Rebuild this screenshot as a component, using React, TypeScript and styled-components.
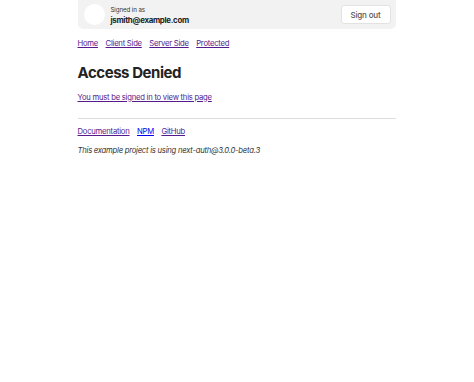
import React from "react";
import styled, { createGlobalStyle } from "styled-components";

const Global = createGlobalStyle`
  html, body { margin: 0; padding: 0; background: #fff; }
  body {
    font-family: Inter, "Liberation Sans", sans-serif;
    color: #333;
    font-size: 7.7px;
    letter-spacing: -0.25px;
    line-height: 1.4;
  }
`;

const Page = styled.div`
  width: 318px;
  padding-right: 1px;
  margin: 0 auto;
`;

const HeaderBox = styled.header`
  display: flex;
  align-items: center;
  gap: 6px;
  height: 29px;
  box-sizing: border-box;
  padding: 0 5px 0 6px;
  background: rgba(0, 0, 0, 0.05);
  border-radius: 0 0 5px 5px;
`;

const Avatar = styled.div`
  width: 21px;
  height: 21px;
  border-radius: 50%;
  background: #fff;
  flex: none;
`;

const SignedText = styled.div`
  flex: 1;
  display: flex;
  flex-direction: column;
  line-height: 10px;
`;

const Small = styled.small`
  font-size: 6.2px;
  letter-spacing: -0.1px;
  color: #333;
`;

const Email = styled.strong`
  font-size: 7.9px;
  font-weight: 700;
  letter-spacing: -0.3px;
  color: #222;
`;

const Button = styled.button`
  font-family: inherit;
  font-size: 8px;
  font-weight: 500;
  letter-spacing: -0.2px;
  white-space: nowrap;
  color: #555;
  background: #fff;
  border: 1px solid #e2e2e2;
  border-radius: 3px;
  padding: 0;
  height: 19px;
  width: 50px;
  cursor: pointer;
`;

const Nav = styled.ul`
  list-style: none;
  margin: 10px 0 0;
  padding: 0;
  display: flex;
  gap: 7.5px;
`;

const Link = styled.a<{ $fresh?: boolean }>`
  color: ${(p) => (p.$fresh ? "#0000ee" : "#551a8b")};
  text-decoration: underline;
`;

const Title = styled.h1`
  margin: 13px 0 0;
  font-size: 15px;
  font-weight: 700;
  letter-spacing: -0.45px;
  color: #222;
  line-height: 20px;
`;

const Para = styled.p`
  margin: 9px 0 0;
  line-height: 11px;
`;

const Footer = styled.footer`
  margin-top: 15px;
`;

const Rule = styled.hr`
  border: none;
  border-top: 1px solid #ddd;
  margin: 0;
`;

const FooterNav = styled(Nav)`
  margin-top: 8px;
`;

const Note = styled.p`
  margin: 7px 0 0;
  font-style: italic;
  line-height: 11px;
`;

export default function App() {
  return (
    <>
      <Global />
      <Page>
        <HeaderBox>
          <Avatar />
          <SignedText>
            <Small>Signed in as</Small>
            <Email>jsmith@example.com</Email>
          </SignedText>
          <Button>Sign out</Button>
        </HeaderBox>
        <Nav>
          <li><Link href="#">Home</Link></li>
          <li><Link href="#">Client Side</Link></li>
          <li><Link href="#">Server Side</Link></li>
          <li><Link href="#">Protected</Link></li>
        </Nav>
        <Title>Access Denied</Title>
        <Para>
          <Link href="#">You must be signed in to view this page</Link>
        </Para>
        <Footer>
          <Rule />
          <FooterNav>
            <li><Link href="#">Documentation</Link></li>
            <li><Link href="#" $fresh>NPM</Link></li>
            <li><Link href="#">GitHub</Link></li>
          </FooterNav>
          <Note>This example project is using next-auth@3.0.0-beta.3</Note>
        </Footer>
      </Page>
    </>
  );
}
